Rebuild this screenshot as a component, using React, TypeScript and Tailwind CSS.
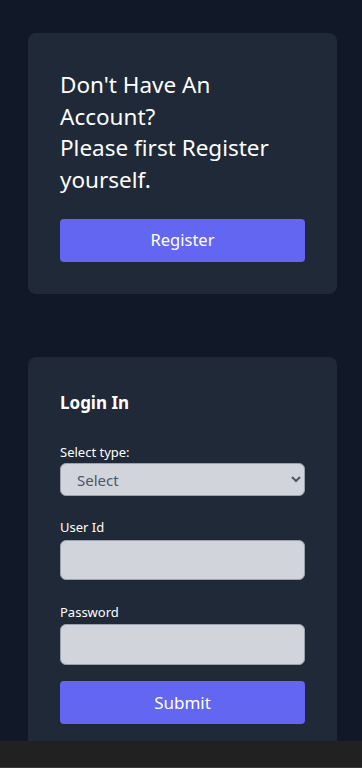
import { useState } from "react";

export default function App() {
  const [type, setType] = useState("");
  const [userId, setUserId] = useState("");
  const [password, setPassword] = useState("");

  return (
    <div className="min-h-screen bg-[#111827] pl-7 pr-[25px] pt-[33px] pb-10 font-['Noto_Sans',sans-serif] text-white">
      {/* REGISTER CARD */}
      <div className="rounded-lg bg-[#1f2937] px-8 pt-9 pb-8">
        <h2 className="text-[22.5px] leading-[31.5px]">
          Don't Have An Account?
          <br />
          Please first Register yourself.
        </h2>
        <button className="mt-6 h-[43px] w-full rounded bg-[#6366f1] text-[16.5px]">
          Register
        </button>
      </div>

      {/* LOGIN CARD */}
      <div className="mt-[63px] rounded-lg bg-[#1f2937] px-8 pt-8 pb-8">
        <h3 className="text-[17px] font-bold leading-[28px]">Login In</h3>

        <div className="mt-[25px]">
          <label className="mb-px block text-[13px] leading-[20px]">Select type:</label>
          <select
            value={type}
            onChange={(e) => setType(e.target.value)}
            className="h-[33px] w-full rounded-md border border-gray-400 bg-[#d1d5db] pl-3 pr-1 text-[15px] text-gray-600"
          >
            <option value="">Select</option>
            <option value="student">Student</option>
            <option value="teacher">Teacher</option>
            <option value="admin">Admin</option>
          </select>
        </div>

        <div className="mt-[21px]">
          <label className="mb-[3px] block text-[13px] leading-[20px]">User Id</label>
          <input
            value={userId}
            onChange={(e) => setUserId(e.target.value)}
            className="h-10 w-full rounded-md border border-gray-400 bg-[#d1d5db] px-3 text-gray-800"
          />
        </div>

        <div className="mt-[22px]">
          <label className="mb-[2px] block text-[13px] leading-[20px]">Password</label>
          <input
            type="password"
            value={password}
            onChange={(e) => setPassword(e.target.value)}
            className="h-[41px] w-full rounded-md border border-gray-400 bg-[#d1d5db] px-3 text-gray-800"
          />
        </div>

        <button className="mt-4 h-[43px] w-full rounded bg-[#6366f1] text-[17px]">
          Submit
        </button>

        <p className="mt-[14px] text-center text-sm text-gray-400">
          Forgot your password?
        </p>
      </div>

      {/* BOTTOM BAR */}
      <div className="fixed inset-x-0 bottom-0 h-[27px] border-b border-[#3a3a3a] bg-[#212121]" />
    </div>
  );
}
